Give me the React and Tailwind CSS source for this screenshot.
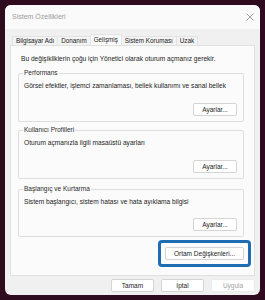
import React from 'react';

const font = { fontFamily: '"Liberation Sans", Arial, sans-serif' };

const tabs = ['Bilgisayar Adı', 'Donanım', 'Gelişmiş', 'Sistem Koruması', 'Uzak'];

const groups = [
    { title: 'Performans', text: 'Görsel efektler, işlemci zamanlaması, bellek kullanımı ve sanal bellek', cls: 'mt-[10px] h-[49px]' },
    { title: 'Kullanıcı Profilleri', text: 'Oturum açmanızla ilgili masaüstü ayarları', cls: 'mt-[8px] h-[49px]' },
    { title: 'Başlangıç ve Kurtarma', text: 'Sistem başlangıcı, sistem hatası ve hata ayıklama bilgisi', cls: 'mt-[10px] h-[48px]' },
];

const Btn = ({ children, className = '' }) => (
    <div className={`h-[13px] flex items-center justify-center rounded-[2px] border border-[#d4d4d4] bg-white text-[6.5px] text-[#1b1b1b] ${className}`}>
        {children}
    </div>
);

const Group = ({ title, text, cls }) => (
    <div className={`relative border border-[#dedede] rounded-[2px] pl-[5px] pr-[6px] pt-[7px] flex flex-col ${cls}`}>
        <span className="absolute -top-[5px] left-[4px] px-[1px] bg-[#fbfbfb] text-[6.5px] leading-[8px] text-[#2a2a2a]">{title}</span>
        <div className="text-[6.6px] leading-[9px] text-[#1b1b1b] whitespace-nowrap">{text}</div>
        <div className="flex justify-end mt-auto mb-[5px]">
            <Btn className="w-[44px]">Ayarlar...</Btn>
        </div>
    </div>
);

export default function App() {
    return (
        <div className="w-[265px] h-[300px] bg-[#2f0b20] p-[5px]" style={font}>
            <div className="w-full h-full rounded-[6px] bg-[#f0f0f0] overflow-hidden flex flex-col">
                <div className="h-[24px] bg-[#fafafa] flex items-center justify-between pl-[7px] pr-[6px] shrink-0">
                    <span className="text-[7px] text-[#9c9c9c]">Sistem Özellikleri</span>
                    <svg width="8" height="8" viewBox="0 0 8 8" className="text-[#8a8a8a]">
                        <path d="M0.5 0.5 L7.5 7.5 M7.5 0.5 L0.5 7.5" stroke="currentColor" strokeWidth="0.8" />
                    </svg>
                </div>

                <div className="px-[5px] flex flex-col flex-1">
                    <div className="flex items-end h-[16px] pl-[2px] shrink-0">
                        {tabs.map((t) => {
                            const active = t === 'Gelişmiş';
                            return (
                                <div
                                    key={t}
                                    className={`flex items-center px-[3px] text-[6.3px] text-[#1b1b1b] border-t border-x border-[#e3e3e3] -mr-[1px] ${
                                        active ? 'h-[11px] bg-[#fbfbfb] z-10' : 'h-[9px] bg-[#f3f3f3]'
                                    }`}
                                >
                                    {t}
                                </div>
                            );
                        })}
                    </div>

                    <div className="h-[231px] shrink-0 bg-[#fbfbfb] border border-[#e0e0e0] flex flex-col pl-[7px] pr-[10px]">
                        <div className="text-[6.6px] leading-[9px] text-[#1b1b1b] pl-[3px] mt-[8px] whitespace-nowrap">
                            Bu değişikliklerin çoğu için Yönetici olarak oturum açmanız gerekir.
                        </div>
                        {groups.map((g) => (
                            <Group key={g.title} {...g} />
                        ))}
                        <div className="flex justify-end -mr-[7px] mt-[3px]">
                            <div className="rounded-[4px] border-[3px] border-[#1e6db4] px-[4px] py-[4px]">
                                <Btn className="w-[79px] h-[12px]">Ortam Değişkenleri...</Btn>
                            </div>
                        </div>
                    </div>

                    <div className="flex justify-end items-center gap-[7px] flex-1">
                        <Btn className="w-[43px] h-[12px]">Tamam</Btn>
                        <Btn className="w-[43px] h-[12px]">İptal</Btn>
                        <Btn className="w-[44px] h-[12px] bg-[#f5f5f5] border-[#ececec] text-[#a3a3a3]">Uygula</Btn>
                    </div>
                </div>
            </div>
        </div>
    );
}
